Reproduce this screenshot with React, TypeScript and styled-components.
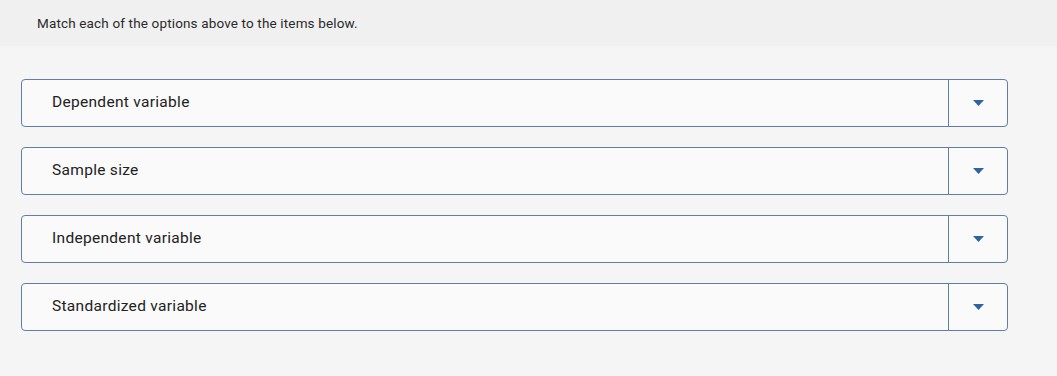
import React from "react";
import styled, { createGlobalStyle } from "styled-components";

const GlobalStyle = createGlobalStyle`
    body {
        margin: 0;
        background: #f5f5f5;
        font-family: Roboto, "Liberation Sans", sans-serif;
        color: #222;
    }
`;

const items = ["Dependent variable", "Sample size", "Independent variable", "Standardized variable"];

export default function App() {
    return (
        <Page>
            <GlobalStyle />
            <Prompt>Match each of the options above to the items below.</Prompt>
            <List>
                {items.map(label => (
                    <Select key={label}>
                        <Label>{label}</Label>
                        <Toggle aria-label="Open">
                            <svg width="11" height="6" viewBox="0 0 11 6">
                                <path d="M0 0 H11 L5.5 6 Z" fill="#2f64a3" />
                            </svg>
                        </Toggle>
                    </Select>
                ))}
            </List>
        </Page>
    );
}

const Page = styled.div`
    width: 1057px;
    height: 376px;
    background: #f5f5f5;
`;

const Prompt = styled.div`
    height: 46px;
    box-sizing: border-box;
    padding: 15px 0 0 37px;
    background: #f0f0f0;
    font-size: 13.5px;
    letter-spacing: 0.15px;
    color: #2b2b2b;
`;

const List = styled.div`
    display: flex;
    flex-direction: column;
    gap: 20px;
    padding: 33px 0 0 21px;
`;

const Select = styled.div`
    display: flex;
    width: 987px;
    height: 48px;
    box-sizing: border-box;
    border: 1px solid #5f7fa6;
    border-radius: 4px;
    background: #fafafa;
`;

const Label = styled.div`
    flex: 1;
    display: flex;
    align-items: center;
    padding: 0 0 2px 30px;
    font-size: 15.5px;
    letter-spacing: 0.3px;
    color: #222;
    border-right: 1px solid #5f7fa6;
`;

const Toggle = styled.div`
    width: 58px;
    display: flex;
    align-items: center;
    justify-content: center;
`;
